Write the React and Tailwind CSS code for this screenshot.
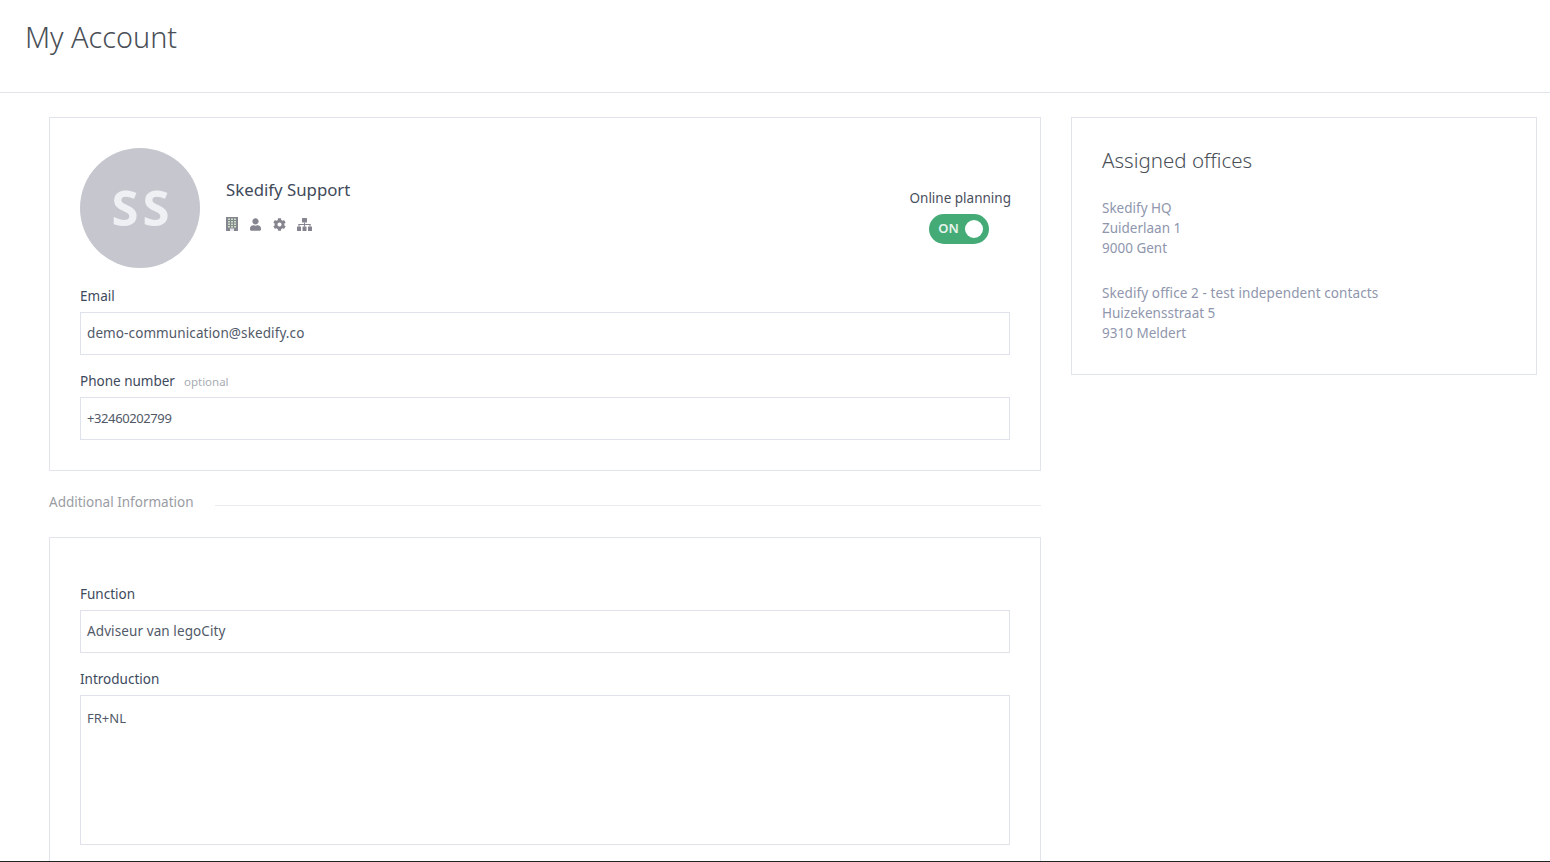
import React from "react";
import { FaUser, FaCog } from "react-icons/fa";

function BuildingIcon() {
  const windows = [];
  for (let row = 0; row < 4; row++) {
    for (let col = 0; col < 3; col++) {
      windows.push(<rect key={`${row}-${col}`} x={2 + col * 3} y={1.5 + row * 2.5} width="2" height="1.5" fill="#c9e0c4" />);
    }
  }
  return (
    <svg viewBox="0 0 12 14" className="w-[12px] h-[14px]">
      <rect width="12" height="14" fill="#85858f" />
      {windows}
      <rect x="4" y="11.5" width="4" height="2.5" fill="#e8e8ec" />
    </svg>
  );
}

function SitemapIcon() {
  return (
    <svg viewBox="0 0 15 13" className="w-[15px] h-[13px] ml-[11px]" fill="#85858f">
      <rect x="5" y="0" width="5" height="4.5" rx="0.5" />
      <rect x="0" y="8.5" width="4" height="4.5" rx="0.5" />
      <rect x="5.5" y="8.5" width="4" height="4.5" rx="0.5" />
      <rect x="11" y="8.5" width="4" height="4.5" rx="0.5" />
      <rect x="7" y="4.5" width="1" height="4" />
      <rect x="1.5" y="6" width="12" height="1" />
      <rect x="1.5" y="6" width="1" height="2.5" />
      <rect x="12.5" y="6" width="1" height="2.5" />
    </svg>
  );
}

function Field({ label, optional, value, valueClass = "text-[13.5px] tracking-[0.1px]", className = "" }) {
  return (
    <div className={className}>
      <div className="h-[17px] flex items-center text-[13.5px] leading-[17px] text-[#3d4a5c]">
        {label}
        {optional && <span className="ml-[9px] text-[11.5px] text-[#a9acb3]">{optional}</span>}
      </div>
      <div className={`mt-[7px] h-[43px] flex items-center border border-[#dfe2ea] px-[6px] text-[#515968] ${valueClass}`}>
        {value}
      </div>
    </div>
  );
}

export default function App() {
  return (
    <div className="h-screen flex flex-col overflow-hidden bg-white font-['Noto_Sans',sans-serif]">
      <header className="h-[93px] shrink-0 border-b border-[#e2e4ea] pl-[25px] pt-[18px]">
        <h1 className="text-[28.8px] leading-[38px] font-light text-[#4a4f57]">My Account</h1>
      </header>

      <main className="flex-1 min-h-0 flex items-start gap-[30px] pl-[49px] pt-[24px] overflow-hidden">
        <div className="w-[992px] shrink-0">
          <section className="h-[354px] border border-[#e2e4ec] px-[30px] pt-[30px]">
            <div className="flex h-[120px]">
              <div className="w-[120px] h-[120px] rounded-full bg-[#c5c6ce] flex items-center justify-center pl-[5px] text-[49px] font-bold text-[#eff0f4] tracking-[4px]">
                SS
              </div>
              <div className="ml-[26px] pt-[31px]">
                <div className="text-[16.8px] leading-[22px] text-[#3f4a5a]">Skedify Support</div>
                <div className="mt-[16px] flex items-center text-[#85858f]">
                  <BuildingIcon />
                  <FaUser className="ml-[12px] w-[11px] h-[13px]" />
                  <FaCog className="ml-[12px] w-[13px] h-[13px]" />
                  <SitemapIcon />
                </div>
              </div>
              <div className="ml-auto -mr-px pt-[40px] flex flex-col items-center">
                <div className="text-[13.5px] leading-[20px] text-[#4a4f60]">Online planning</div>
                <div className="mt-[6px] mr-[2px] w-[60px] h-[30px] rounded-full bg-[#45ab76] flex items-center justify-between pl-[9px] pr-[6px]">
                  <span className="text-[13px] font-semibold text-[#e6f4ec]">ON</span>
                  <span className="w-[18px] h-[18px] rounded-full bg-white" />
                </div>
              </div>
            </div>
            <Field className="mt-[20px]" label="Email" value="demo-communication@skedify.co" />
            <Field className="mt-[18px]" label="Phone number" optional="optional" value="+32460202799" valueClass="text-[13px] tracking-[-0.4px]" />
          </section>

          <div className="h-[66px] flex items-center">
            <span className="text-[13.5px] text-[#9a9ca3] -mt-[4px]">Additional Information</span>
            <div className="ml-[21px] flex-1 h-px bg-[#e8eaee] mt-[3px]" />
          </div>

          <section className="h-[400px] border border-[#e2e4ec] px-[30px] pt-[48px]">
            <Field label="Function" value="Adviseur van legoCity" />
            <div className="mt-[18px]">
              <div className="h-[17px] flex items-center text-[13.5px] text-[#3d4a5c]">Introduction</div>
              <div className="mt-[7px] h-[150px] border border-[#dfe2ea] px-[6px] pt-[13px] text-[13px] leading-[18px] text-[#515968]">
                FR+NL
              </div>
            </div>
          </section>
        </div>

        <aside className="w-[466px] shrink-0 h-[258px] border border-[#e2e4ec] pl-[30px] pt-[28px]">
          <h2 className="text-[20.5px] leading-[28px] font-light text-[#4a4f57]">Assigned offices</h2>
          <div className="mt-[24px] text-[13.5px] leading-[20px] text-[#8f96ad]">
            <div>Skedify HQ</div>
            <div>Zuiderlaan 1</div>
            <div>9000 Gent</div>
          </div>
          <div className="mt-[25px] text-[13.5px] leading-[20px] text-[#8f96ad]">
            <div className="tracking-[0.1px]">Skedify office 2 - test independent contacts</div>
            <div>Huizekensstraat 5</div>
            <div>9310 Meldert</div>
          </div>
        </aside>
      </main>
      <div className="h-px shrink-0 bg-[#222]" />
    </div>
  );
}
